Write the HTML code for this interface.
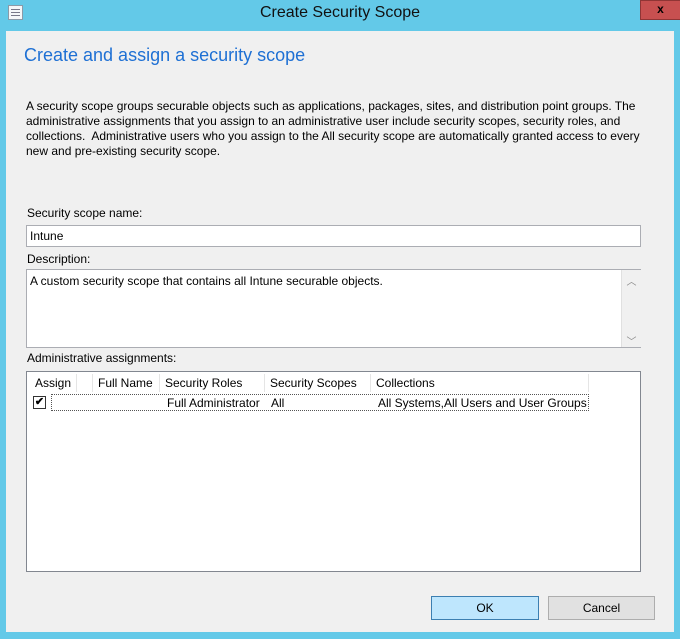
<html><head><style>
body{margin:0;width:680px;height:639px;background:#63c9e8;position:relative;font-family:"Liberation Sans",sans-serif;font-size:12px;color:#000;overflow:hidden}
.a{position:absolute}
.client{left:6px;top:31px;width:668px;height:601px;background:#f0f0f0}
.box{background:#fff;border:1px solid #abadb3;box-sizing:border-box}
.btn{box-sizing:border-box;text-align:center;line-height:20px;font-size:12px}
.hd{top:2px;height:18px;line-height:18px;border-right:1px solid #e5e5e5;padding-left:5px;box-sizing:border-box;color:#000}
</style></head><body>
<div class="a" style="left:8px;top:5px;width:15px;height:15px;border:1px solid #8a9aa8;background:#f4f6f8;box-sizing:border-box"><div class="a" style="left:2px;top:3px;width:9px;height:1px;background:#778"></div><div class="a" style="left:2px;top:6px;width:9px;height:1px;background:#778"></div><div class="a" style="left:2px;top:9px;width:9px;height:1px;background:#778"></div></div>
<div class="a" style="left:0;top:4px;width:680px;text-align:center;font-size:16px;color:#111">Create Security Scope</div>
<div class="a" style="left:640px;top:0;width:41px;height:20px;background:#c75050;border:1px solid #8f3535;box-sizing:border-box;color:#000;font-weight:bold;text-align:center;font-size:12px;line-height:17px">x</div>
<div class="a client"></div>
<div class="a" style="left:24px;top:45px;font-size:18px;color:#1e70d4">Create and assign a security scope</div>
<div class="a" style="left:26px;top:99px;width:625px;line-height:15px;font-size:12px">A security scope groups securable objects such as applications, packages, sites, and distribution point groups. The administrative assignments that you assign to an administrative user include security scopes, security roles, and collections.&nbsp; Administrative users who you assign to the All security scope are automatically granted access to every new and pre-existing security scope.</div>
<div class="a" style="left:27px;top:206px">Security scope name:</div>
<div class="a box" style="left:26px;top:225px;width:615px;height:22px;padding:3px 3px;line-height:14px">Intune</div>
<div class="a" style="left:27px;top:252px">Description:</div>
<div class="a box" style="left:26px;top:269px;width:615px;height:79px;padding:4px 3px">A custom security scope that contains all Intune securable objects.</div>
<div class="a" style="left:621px;top:270px;width:19px;height:77px;background:#f0f0f0;border-left:1px solid #e0e0e0;color:#888;font-size:10px;text-align:center"><div style="margin-top:3px">︿</div><div style="margin-top:45px">﹀</div></div>
<div class="a" style="left:27px;top:351px">Administrative assignments:</div>
<div class="a box" style="left:26px;top:371px;width:615px;height:201px;border-color:#828790"></div>
<div class="a hd" style="left:30px;width:47px;top:374px">Assign</div>
<div class="a hd" style="left:77px;width:16px;top:374px"></div>
<div class="a hd" style="left:93px;width:67px;top:374px">Full Name</div>
<div class="a hd" style="left:160px;width:105px;top:374px">Security Roles</div>
<div class="a hd" style="left:265px;width:106px;top:374px">Security Scopes</div>
<div class="a hd" style="left:371px;width:218px;top:374px">Collections</div>
<div class="a" style="left:51px;top:394px;width:538px;height:17px;border:1px dotted #555;box-sizing:border-box"></div>
<div class="a" style="left:33px;top:396px;width:13px;height:13px;border:1px solid #333;box-sizing:border-box;background:#fff;font-size:11px;line-height:11px;text-align:center;font-weight:bold">✔</div>
<div class="a" style="left:167px;top:396px">Full Administrator</div>
<div class="a" style="left:271px;top:396px">All</div>
<div class="a" style="left:378px;top:396px">All Systems,All Users and User Groups</div>
<div class="a btn" style="left:431px;top:596px;width:108px;height:24px;background:#bee6fd;border:1px solid #3c7fb1;line-height:22px">OK</div>
<div class="a btn" style="left:548px;top:596px;width:107px;height:24px;background:#e1e1e1;border:1px solid #adadad;line-height:22px">Cancel</div>
</body></html>
